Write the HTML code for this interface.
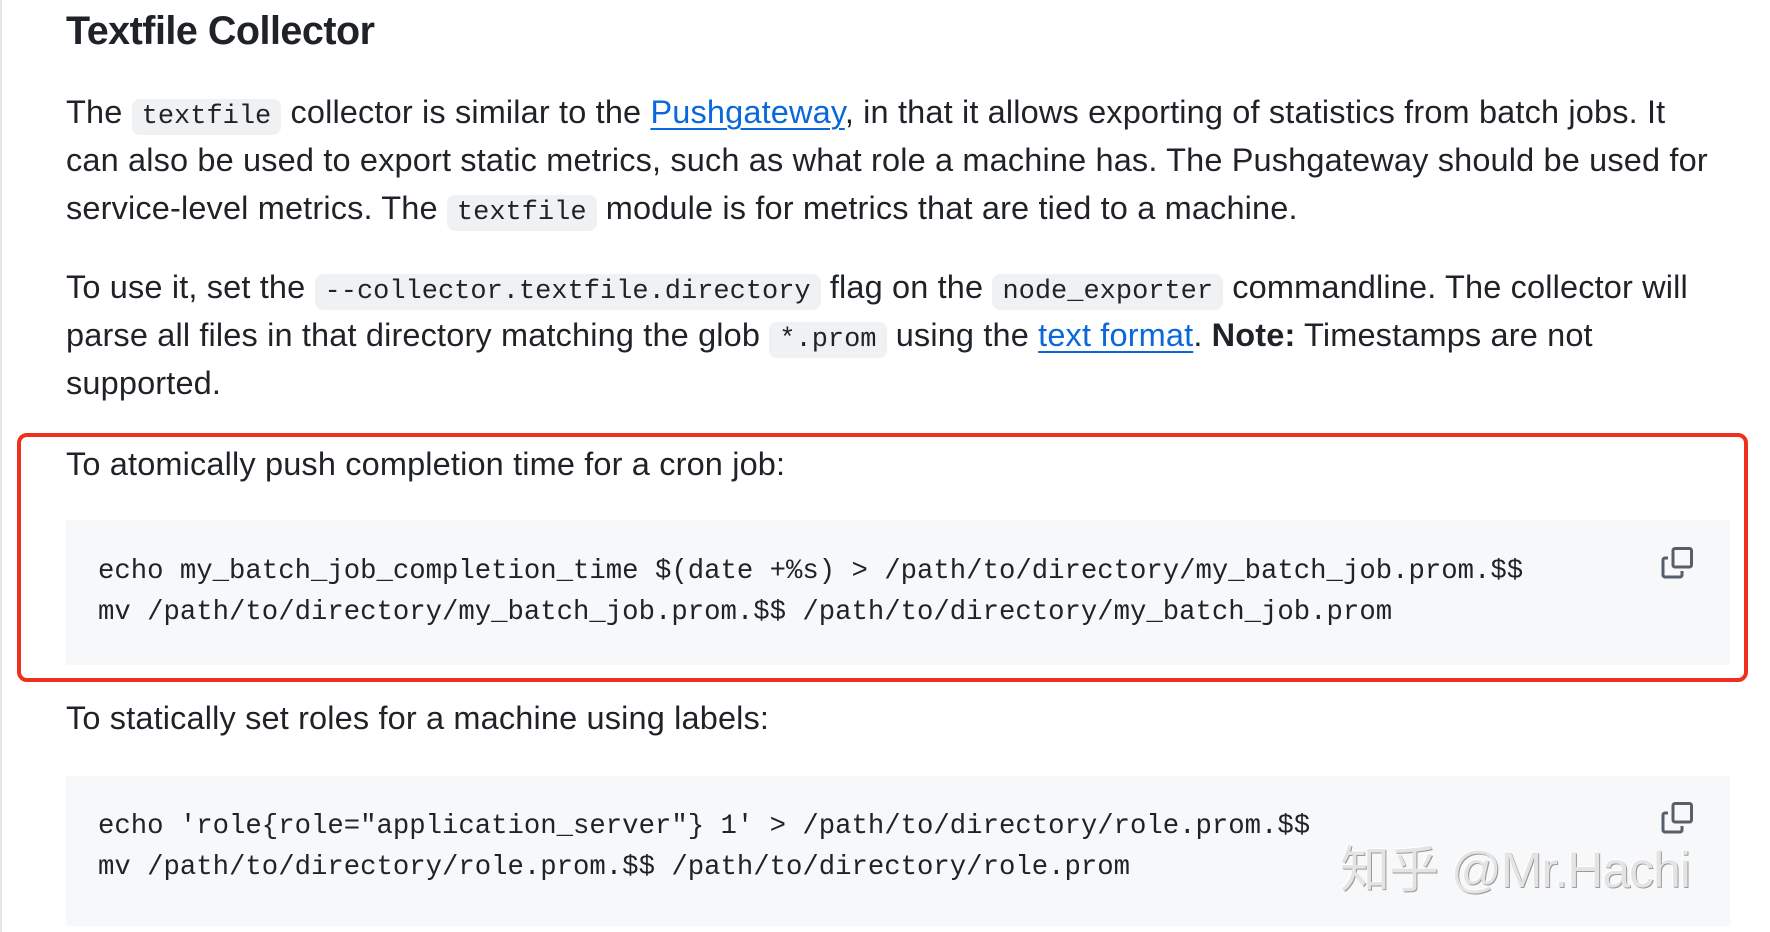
<!DOCTYPE html>
<html><head><meta charset="utf-8"><style>
html,body{margin:0;padding:0;background:#fff;width:1770px;height:932px;overflow:hidden;position:relative}
body{font-family:"Liberation Sans","Noto Sans CJK SC",sans-serif;color:#1f2328}
.l{position:absolute;left:66px;font-size:32.5px;white-space:nowrap;line-height:48px;letter-spacing:0.15px}
h1{position:absolute;left:66px;top:6px;margin:0;font-size:39.5px;font-weight:bold;letter-spacing:-0.5px;line-height:50px}
code{font-family:"Liberation Mono",monospace;font-size:27px;background:#eff1f3;border-radius:8px;padding:3px 10px;letter-spacing:0}
a{color:#0969da;text-decoration:underline;text-underline-offset:5px;text-decoration-thickness:2px}
.pre{position:absolute;left:66px;width:1664px;background:#f6f8fa}
.pre div{position:absolute;left:32px;font-family:"Liberation Mono",monospace;font-size:27.3px;white-space:pre;line-height:40px}
.red{position:absolute;left:17px;top:433px;width:1723px;height:241px;border:4px solid #f0301c;border-radius:10px}
.copy{position:absolute;width:32px;height:32px}
.wm{position:absolute;left:1340px;top:830px;font-size:50px;color:#e4e4e4;text-shadow:1px 1px 0 #9a9a9a,-1px -1px 0 #fff;white-space:nowrap;letter-spacing:-1px}
</style></head><body>
<div style="position:absolute;left:0;top:0;width:2px;height:932px;background:#e6e6e6"></div>
<h1>Textfile Collector</h1>
<div class="l" style="top:88px">The <code>textfile</code> collector is similar to the <a>Pushgateway</a>, in that it allows exporting of statistics from batch jobs. It</div>
<div class="l" style="top:136px">can also be used to export static metrics, such as what role a machine has. The Pushgateway should be used for</div>
<div class="l" style="top:184px">service-level metrics. The <code>textfile</code> module is for metrics that are tied to a machine.</div>
<div class="l" style="top:263px">To use it, set the <code>--collector.textfile.directory</code> flag on the <code>node_exporter</code> commandline. The collector will</div>
<div class="l" style="top:311px">parse all files in that directory matching the glob <code>*.prom</code> using the <a>text format</a>. <b>Note:</b> Timestamps are not</div>
<div class="l" style="top:359px">supported.</div>
<div class="l" style="top:440px">To atomically push completion time for a cron job:</div>
<div class="pre" style="top:520px;height:145px">
<div style="top:32px">echo my_batch_job_completion_time $(date +%s) &gt; /path/to/directory/my_batch_job.prom.$$</div>
<div style="top:73px">mv /path/to/directory/my_batch_job.prom.$$ /path/to/directory/my_batch_job.prom</div>
</div>
<svg class="copy" style="left:1661px;top:547px" viewBox="0 0 32 32" fill="none" stroke="#57606a" stroke-width="3" stroke-linejoin="round"><rect x="12" y="1.5" width="18.5" height="18.5" rx="2"/><path d="M7 11H4a2 2 0 0 0-2 2v15a2 2 0 0 0 2 2h15a2 2 0 0 0 2-2v-4"/></svg>
<div class="red"></div>
<div class="l" style="top:694px">To statically set roles for a machine using labels:</div>
<div class="pre" style="top:776px;height:150px">
<div style="top:31px">echo 'role{role="application_server"} 1' &gt; /path/to/directory/role.prom.$$</div>
<div style="top:72px">mv /path/to/directory/role.prom.$$ /path/to/directory/role.prom</div>
</div>
<svg class="copy" style="left:1661px;top:802px" viewBox="0 0 32 32" fill="none" stroke="#57606a" stroke-width="3" stroke-linejoin="round"><rect x="12" y="1.5" width="18.5" height="18.5" rx="2"/><path d="M7 11H4a2 2 0 0 0-2 2v15a2 2 0 0 0 2 2h15a2 2 0 0 0 2-2v-4"/></svg>
<div class="wm">知乎 @Mr.Hachi</div>
</body></html>
